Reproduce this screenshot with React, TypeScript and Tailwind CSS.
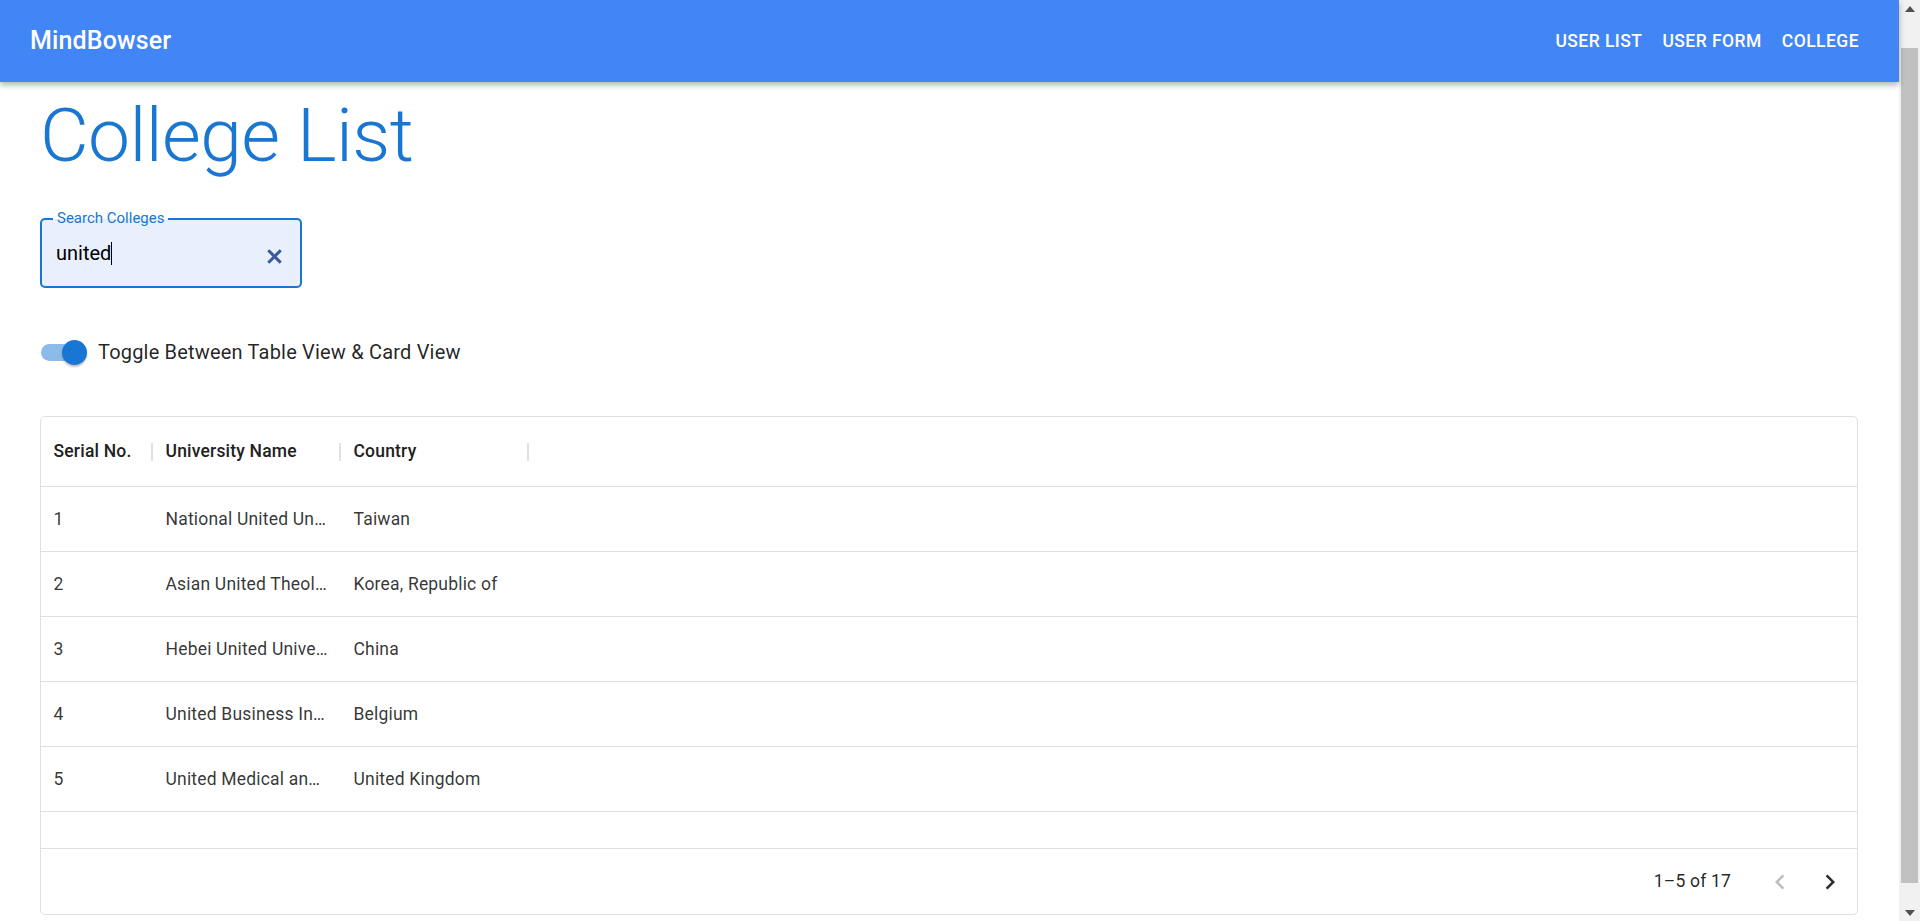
import { useState } from 'react';

interface College {
  name: string;
  country: string;
}

const colleges: College[] = [
  { name: 'National United University', country: 'Taiwan' },
  { name: 'Asian United Theological University', country: 'Korea, Republic of' },
  { name: 'Hebei United University', country: 'China' },
  { name: 'United Business Institute', country: 'Belgium' },
  { name: 'United Medical and Dental Schools, University of London', country: 'United Kingdom' },
];

const navLinks = ['User List', 'User Form', 'College'];

function Separator() {
  return <div className="w-[2px] h-[18px] bg-[#e0e0e0] shrink-0" />;
}

function ScrollBar() {
  return (
    <div className="w-[21px] shrink-0 bg-[#f1f1f1] flex flex-col items-center">
      <div className="h-[17px] w-full flex items-center justify-center">
        <svg width="10" height="6" viewBox="0 0 10 6" className="fill-[#505050]">
          <path d="M0 6 5 0l5 6z" />
        </svg>
      </div>
      <div className="mt-[31px] w-[17px] h-[835px] bg-[#c1c1c1]" />
      <div className="flex-1" />
      <div className="h-[17px] w-full flex items-center justify-center">
        <svg width="10" height="6" viewBox="0 0 10 6" className="fill-[#505050]">
          <path d="M0 0h10L5 6z" />
        </svg>
      </div>
    </div>
  );
}

export default function App() {
  const [query, setQuery] = useState('united');
  const [tableView, setTableView] = useState(true);

  return (
    <div className="flex h-[921px] overflow-hidden bg-white font-['Roboto',sans-serif] text-[#212121]">
      <div className="flex-1 min-w-0 flex flex-col">
        <header className="relative z-10 h-[82px] shrink-0 bg-[#4285f4] flex items-center justify-between px-[30px] shadow-[0_3px_6px_rgba(0,0,0,0.3)]">
          <div className="text-white text-[25px] font-medium tracking-[0.15px]">MindBowser</div>
          <nav className="flex items-center">
            {navLinks.map((link) => (
              <button
                key={link}
                className="px-[10px] py-[7px] text-white text-[17.5px] font-medium uppercase tracking-[0.45px] leading-[1.75]"
              >
                {link}
              </button>
            ))}
          </nav>
        </header>

        <main className="pl-[40px] pr-[41px]">
          <h1 className="mt-[8px] text-[75px] font-light leading-[90px] tracking-[-0.6px] text-[#1976d2]">
            College List
          </h1>

          <div className="mt-[38px] relative w-[262px] h-[70px] border-2 border-[#1976d2] rounded-[5px] bg-[#e8f0fe]">
            <span className="absolute -top-[10px] left-[11px] px-[4px] text-[15px] leading-[17px] text-[#1976d2] bg-[linear-gradient(to_bottom,#ffffff_50%,#e8f0fe_50%)]">
              Search Colleges
            </span>
            <div className="flex items-center h-full pl-[14px] pr-[18px]">
              <div className="flex-1 flex items-center text-[20px] text-black">
                <span>{query}</span>
                <span className="w-px h-[23px] bg-black" />
              </div>
              <button onClick={() => setQuery('')} className="mt-[6px]">
                <svg width="15" height="15" viewBox="0 0 16 16" className="stroke-[#3a5a9c]" strokeWidth="3.2" strokeLinecap="square">
                  <path d="M2.5 2.5 13.5 13.5M13.5 2.5 2.5 13.5" />
                </svg>
              </button>
            </div>
          </div>

          <label className="mt-[40px] flex items-center h-[48px] -ml-[14px] cursor-pointer">
            <div className="relative w-[72px] h-[48px] shrink-0" onClick={() => setTableView(!tableView)}>
              <div className="absolute left-[15px] top-[16px] w-[42px] h-[17px] rounded-full bg-[#8cbbe9]" />
              <div className="absolute left-[36px] top-[11.5px] w-[25px] h-[25px] rounded-full bg-[#1976d2] shadow-[0_2px_2px_rgba(0,0,0,0.25)]" />
            </div>
            <span className="text-[20px] leading-[1.5] tracking-[0.19px] text-[rgba(0,0,0,0.87)]">
              Toggle Between Table View &amp; Card View
            </span>
          </label>

          <div className="mt-[40px] border border-[#e0e0e0] rounded-[5px] text-[17.5px] tracking-[0.19px]">
            <div className="flex h-[70px] border-b border-[#e0e0e0] font-medium">
              <div className="w-[112px] flex items-center justify-between pl-[12.5px]">
                <span>Serial No.</span>
                <Separator />
              </div>
              <div className="w-[188px] flex items-center justify-between pl-[12.5px]">
                <span>University Name</span>
                <Separator />
              </div>
              <div className="w-[188px] flex items-center justify-between pl-[12.5px]">
                <span>Country</span>
                <Separator />
              </div>
            </div>

            {colleges.map((c, i) => (
              <div key={i} className="flex h-[65px] border-b border-[#e0e0e0] items-center text-[rgba(0,0,0,0.8)]">
                <div className="w-[112px] px-[12.5px]">{i + 1}</div>
                <div className="w-[188px] px-[12.5px] truncate">{c.name}</div>
                <div className="w-[188px] px-[12.5px] truncate">{c.country}</div>
              </div>
            ))}

            <div className="h-[36px]" />

            <div className="h-[66px] border-t border-[#e0e0e0] flex items-center justify-end pr-[2px]">
              <span className="text-[17.5px] text-[rgba(0,0,0,0.87)]">1–5 of 17</span>
              <div className="ml-[24px] flex items-center">
                <button className="w-[50px] h-[50px] flex items-center justify-center" disabled>
                  <svg width="30" height="30" viewBox="0 0 24 24" className="fill-[#bdbdbd]">
                    <path d="M15.41 16.59 10.83 12l4.58-4.59L14 6l-6 6 6 6 1.41-1.41z" />
                  </svg>
                </button>
                <button className="w-[50px] h-[50px] flex items-center justify-center">
                  <svg width="30" height="30" viewBox="0 0 24 24" className="fill-[#2b2b2b]">
                    <path d="M8.59 16.59 13.17 12 8.59 7.41 10 6l6 6-6 6-1.41-1.41z" />
                  </svg>
                </button>
              </div>
            </div>
          </div>
        </main>
      </div>
      <ScrollBar />
    </div>
  );
}
